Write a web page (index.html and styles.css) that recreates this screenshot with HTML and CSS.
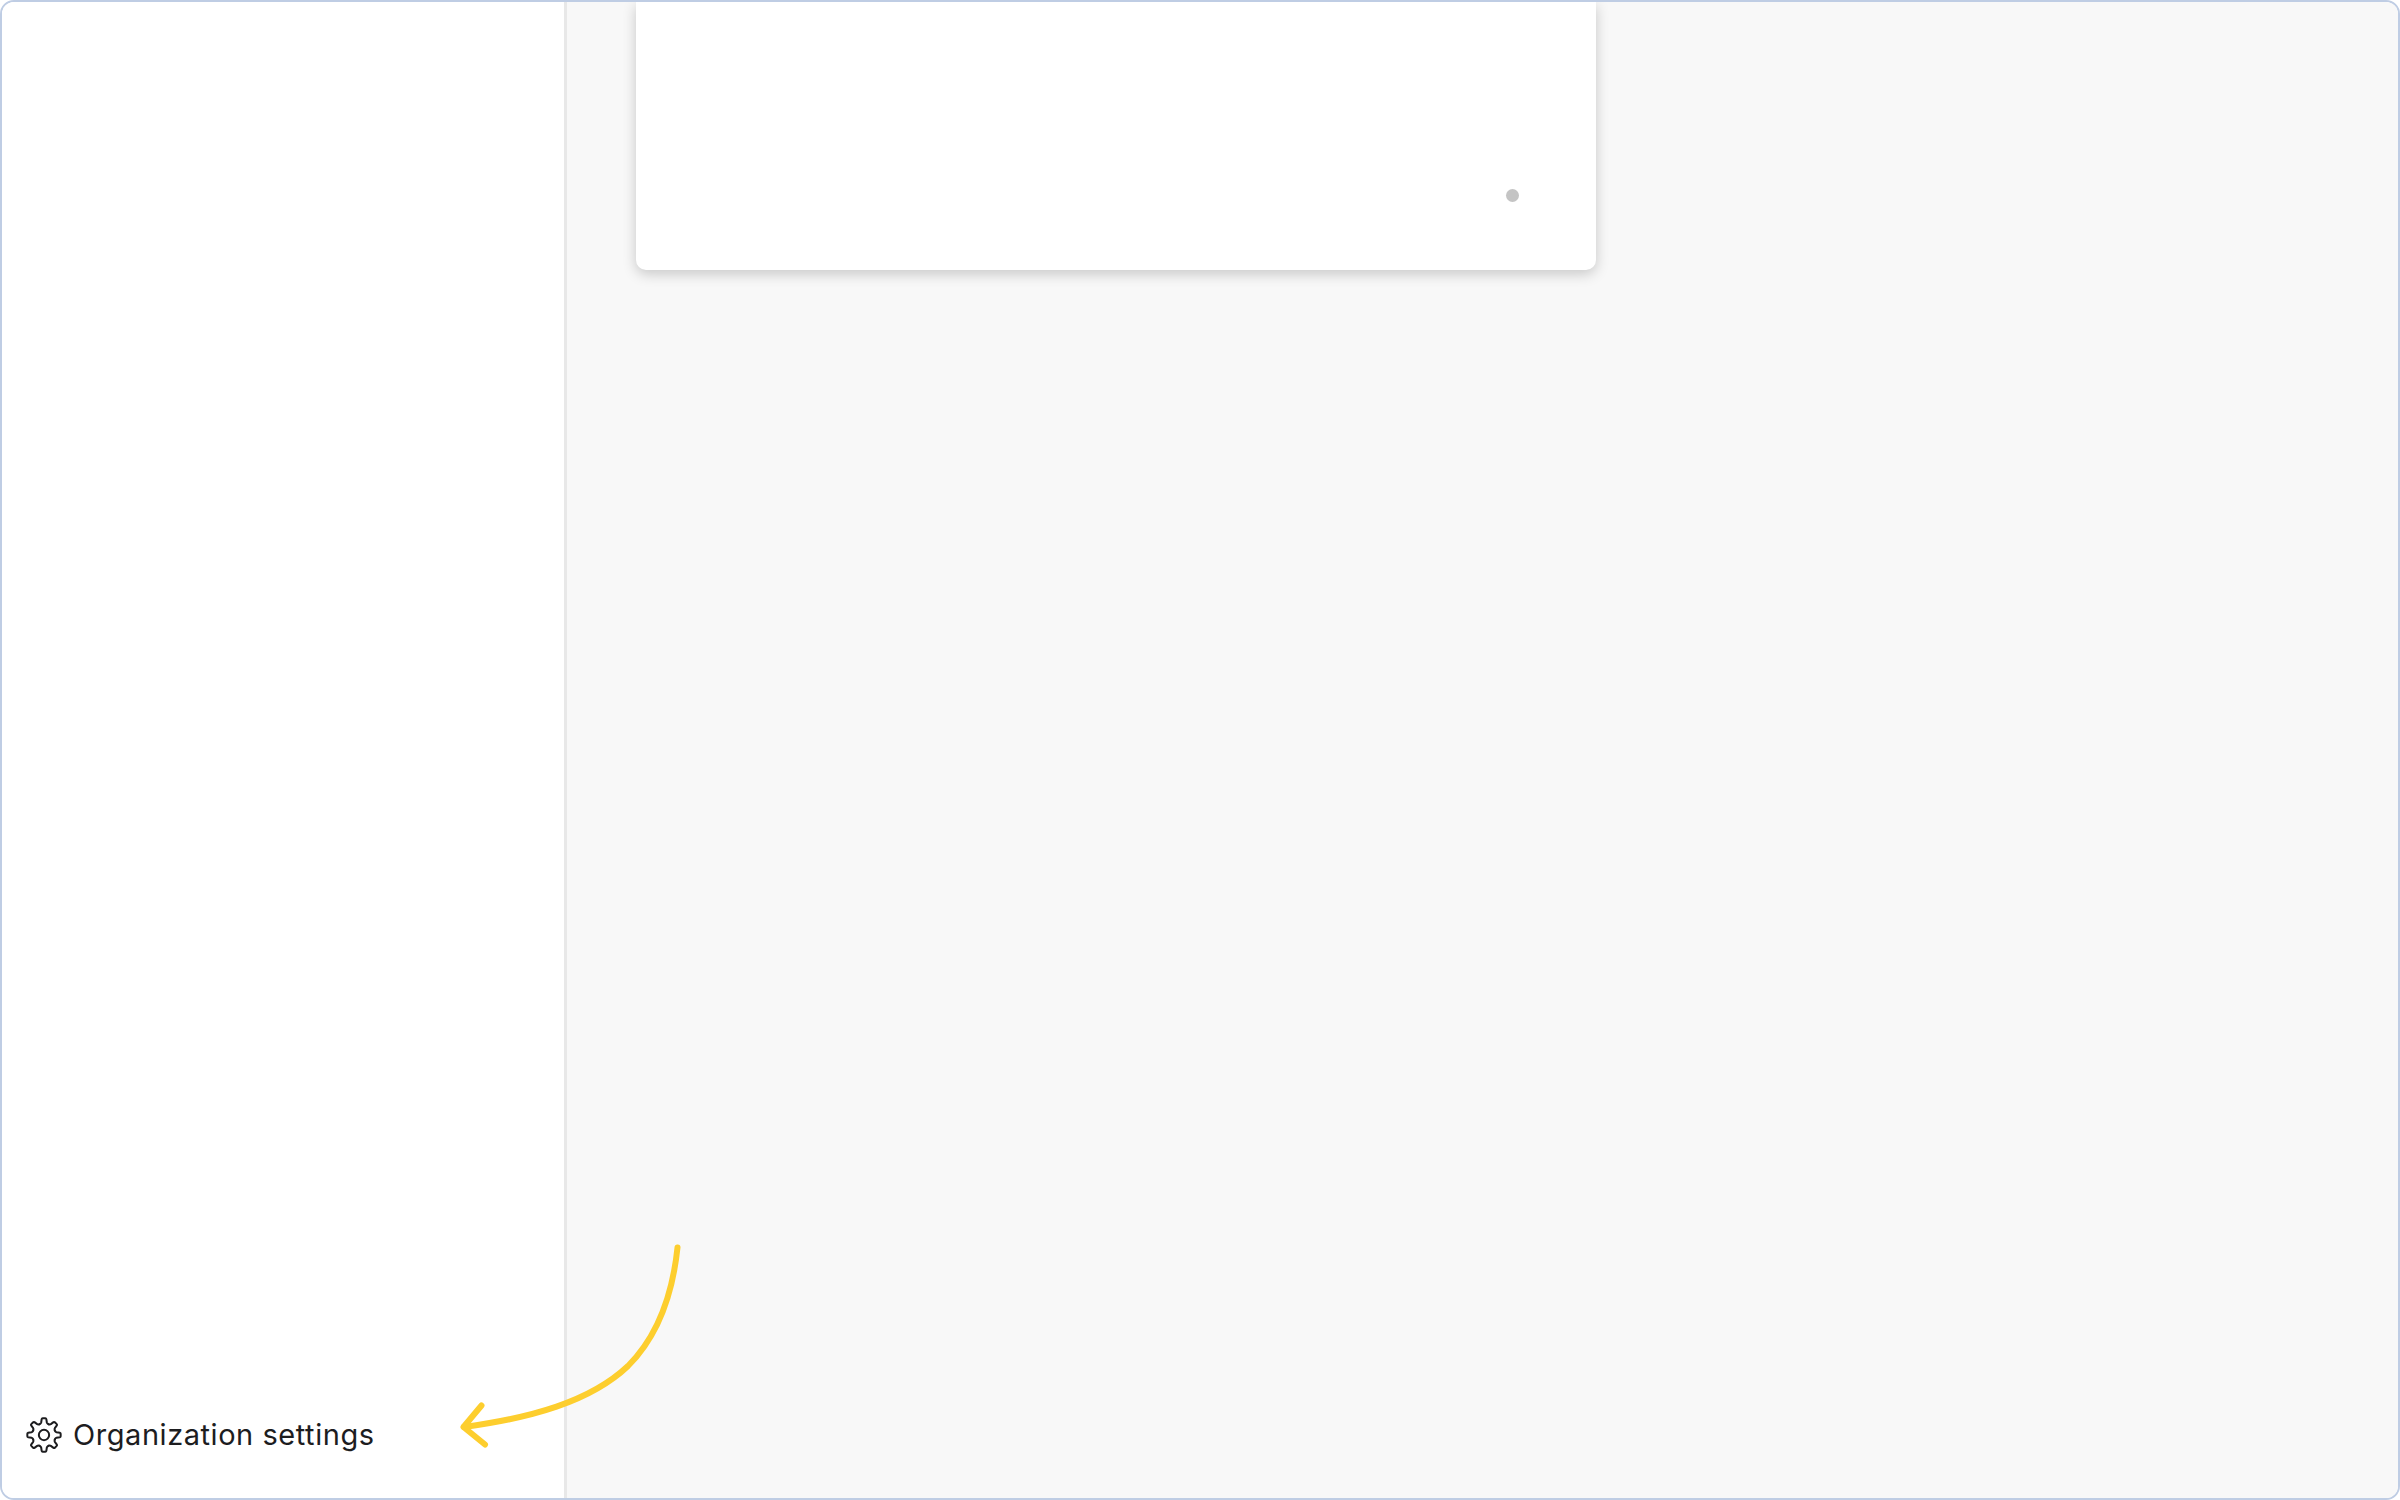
FILE: index.html
```html
<!DOCTYPE html>
<html lang="en">
<head>
    <meta charset="UTF-8">
    <title>Organization settings</title>
    <link rel="stylesheet" href="styles.css">
</head>
<body>
    <div class="frame">
        <aside class="sidebar">
            <a class="settings-link" href="#">
                <svg class="gear" viewBox="0 0 24 24" fill="none" stroke="currentColor" stroke-width="1.2" stroke-linecap="round" stroke-linejoin="round">
                    <defs>
                        <path id="tooth" d="M9.32 5.53C9.8 5.3 10.2 5 10.3 4.5L10.6 2.5Q10.7 2 11.2 2H12.8Q13.3 2 13.4 2.5L13.7 4.5C13.8 5 14.2 5.3 14.68 5.53"/>
                    </defs>
                    <use href="#tooth"/>
                    <use href="#tooth" transform="rotate(45 12 12)"/>
                    <use href="#tooth" transform="rotate(90 12 12)"/>
                    <use href="#tooth" transform="rotate(135 12 12)"/>
                    <use href="#tooth" transform="rotate(180 12 12)"/>
                    <use href="#tooth" transform="rotate(225 12 12)"/>
                    <use href="#tooth" transform="rotate(270 12 12)"/>
                    <use href="#tooth" transform="rotate(315 12 12)"/>
                    <circle cx="12" cy="12" r="3.1"/>
                </svg>
                <span>Organization settings</span>
            </a>
        </aside>
        <main class="content">
            <div class="card">
                <span class="dot"></span>
            </div>
        </main>
        <svg class="arrow" viewBox="0 0 2400 1500" fill="none" stroke="#fdce2e" stroke-width="6" stroke-linecap="round" stroke-linejoin="round">
            <path d="M677.500 1247.500C672 1300 654 1340 628 1366C590 1402 530 1418 464 1427"/>
            <path d="M481.500 1405.500L463.500 1427L485 1444.500"/>
        </svg>
    </div>
</body>
</html>
```
FILE: styles.css
```css
*{
    box-sizing: border-box;
}
html, body{
    margin: 0;
    background-color: #fff;
}
.frame{
    position: relative;
    display: flex;
    width: 2400px;
    height: 1500px;
    border: 2px solid #bfcde4;
    border-radius: 14px;
    overflow: hidden;
}
.sidebar{
    width: 565px;
    flex-shrink: 0;
    display: flex;
    flex-direction: column;
    justify-content: flex-end;
    background-color: #fff;
    border-right: 3px solid #e8e8e8;
    padding: 0 0 43px 22px;
}
.settings-link{
    display: flex;
    align-items: center;
    gap: 9px;
    color: #1d1d1f;
    text-decoration: none;
    font-family: Inter, "Liberation Sans", sans-serif;
    font-size: 29px;
    letter-spacing: 0.55px;
    line-height: 36px;
}
.gear{
    width: 40px;
    height: 40px;
    flex-shrink: 0;
}
.content{
    flex: 1;
    background-color: #f8f8f8;
    padding-left: 69px;
}
.card{
    display: flex;
    justify-content: flex-end;
    align-items: flex-end;
    width: 960px;
    height: 268px;
    padding: 0 77px 68px 0;
    background-color: #fff;
    border-radius: 0 0 10px 10px;
    box-shadow: 0 4px 14px rgba(0, 0, 0, 0.2);
}
.dot{
    width: 13px;
    height: 13px;
    border-radius: 50%;
    background-color: #c4c4c4;
}
.arrow{
    position: absolute;
    left: -2px;
    top: -2px;
    width: 2400px;
    height: 1500px;
    pointer-events: none;
}
```
